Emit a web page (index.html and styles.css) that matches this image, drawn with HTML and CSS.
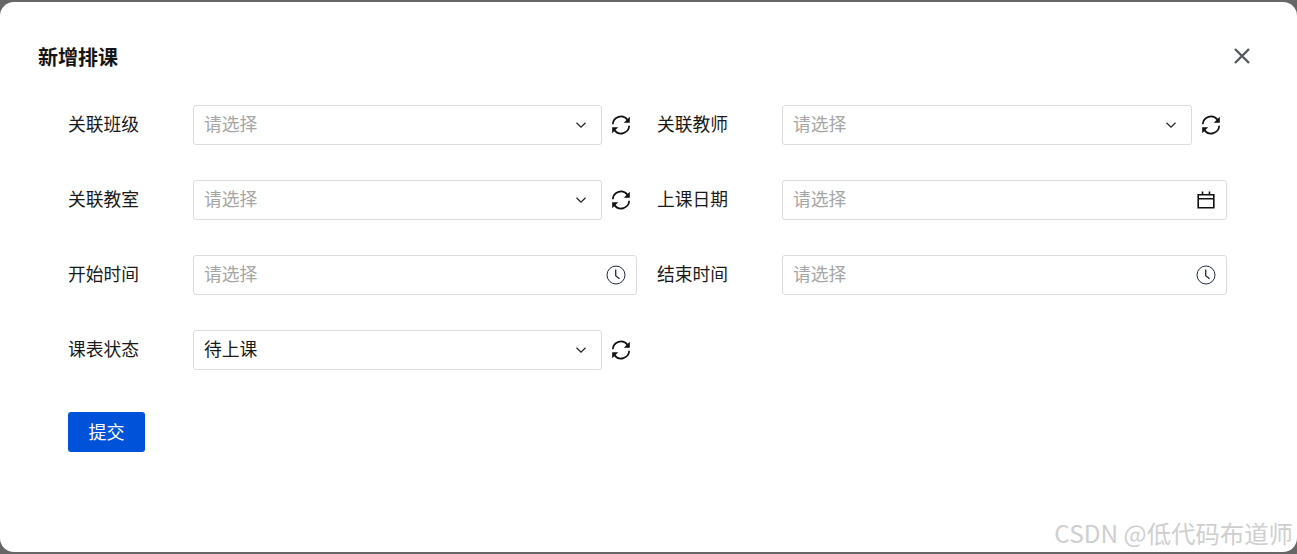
FILE: index.html
```html
<!DOCTYPE html>
<html lang="zh-CN">
<head>
    <meta charset="UTF-8">
    <title>新增排课</title>
    <link rel="stylesheet" href="styles.css">
</head>
<body>
    <svg class="icon-defs" width="0" height="0">
        <symbol id="chevron" viewBox="0 0 12 12"><path d="M1.500 3.800 6 8.200l4.500-4.400" fill="none" stroke="currentColor" stroke-width="1.200"/></symbol>
        <symbol id="refresh" viewBox="0 0 20 20">
            <path d="M1.800 9.200A8.200 8.200 0 0 1 16.400 4.600M18.200 10.800A8.200 8.200 0 0 1 3.600 15.400" fill="none" stroke="currentColor" stroke-width="1.700"/>
            <path d="M18.800 1.800v6h-6zM1.200 18.200v-6h6z" fill="currentColor"/>
        </symbol>
        <symbol id="clock" viewBox="0 0 20 20">
            <circle cx="10" cy="10" r="9" fill="none" stroke="currentColor" stroke-width="1"/>
            <path d="M9.700 4.500V10.800l3.800 3" fill="none" stroke="currentColor" stroke-width="1.300"/>
        </symbol>
        <symbol id="calendar" viewBox="0 0 18 18">
            <path d="M1.200 3.700h15.600v13H1.200zM1.200 7.700h15.600M5.500 .5v3.500M12.500 .5v3.500" fill="none" stroke="currentColor" stroke-width="1.600"/>
        </symbol>
    </svg>

    <div class="dialog">
        <header class="dialog-header">
            <h2>新增排课</h2>
            <svg class="close-icon" viewBox="0 0 16 16"><path d="M1 1l14 14M15 1 1 15" fill="none" stroke="currentColor" stroke-width="2.400"/></svg>
        </header>

        <form class="form-grid">
            <div class="form-item">
                <label>关联班级</label>
                <div class="control">
                    <div class="input"><span class="placeholder">请选择</span><svg class="chevron"><use href="#chevron"/></svg></div>
                    <svg class="refresh"><use href="#refresh"/></svg>
                </div>
            </div>
            <div class="form-item">
                <label>关联教师</label>
                <div class="control">
                    <div class="input"><span class="placeholder">请选择</span><svg class="chevron"><use href="#chevron"/></svg></div>
                    <svg class="refresh"><use href="#refresh"/></svg>
                </div>
            </div>
            <div class="form-item">
                <label>关联教室</label>
                <div class="control">
                    <div class="input"><span class="placeholder">请选择</span><svg class="chevron"><use href="#chevron"/></svg></div>
                    <svg class="refresh"><use href="#refresh"/></svg>
                </div>
            </div>
            <div class="form-item">
                <label>上课日期</label>
                <div class="control">
                    <div class="input"><span class="placeholder">请选择</span><svg class="calendar"><use href="#calendar"/></svg></div>
                </div>
            </div>
            <div class="form-item">
                <label>开始时间</label>
                <div class="control">
                    <div class="input"><span class="placeholder">请选择</span><svg class="clock"><use href="#clock"/></svg></div>
                </div>
            </div>
            <div class="form-item">
                <label>结束时间</label>
                <div class="control">
                    <div class="input"><span class="placeholder">请选择</span><svg class="clock"><use href="#clock"/></svg></div>
                </div>
            </div>
            <div class="form-item">
                <label>课表状态</label>
                <div class="control">
                    <div class="input"><span>待上课</span><svg class="chevron"><use href="#chevron"/></svg></div>
                    <svg class="refresh"><use href="#refresh"/></svg>
                </div>
            </div>
        </form>

        <button class="submit-button" type="button">提交</button>
    </div>

    <div class="watermark">CSDN @低代码布道师</div>
</body>
</html>
```

FILE: styles.css
```css
html, body {
    height: 100%;
}

body {
    margin: 0;
    padding: 2px 0;
    box-sizing: border-box;
    overflow: hidden;
    background: #666;
    color: #1a1a1a;
    font-family: "Noto Sans CJK SC", "Liberation Sans", sans-serif;
    font-size: 17.800px;
}

.icon-defs {
    position: absolute;
}

.dialog {
    height: 100%;
    box-sizing: border-box;
    padding: 0 46px 0 68px;
    background: #fff;
    border-radius: 14px;
}

.dialog-header {
    display: flex;
    align-items: center;
    justify-content: space-between;
    height: 103px;
    padding-top: 7px;
    box-sizing: border-box;
    margin-left: -30px;
}

.dialog-header h2 {
    margin: 0;
    font-size: 20px;
    line-height: 28px;
    font-weight: 700;
    color: #151515;
}

.close-icon {
    width: 16px;
    height: 16px;
    margin: -3px 1px 0 0;
    color: #565a60;
}

.form-grid {
    display: grid;
    grid-template-columns: 569px 570px;
    column-gap: 20px;
    row-gap: 35px;
}

.form-item {
    display: flex;
    align-items: center;
    height: 40px;
}

.form-item label {
    flex: 0 0 125px;
    line-height: 37px;
    padding-bottom: 3px;
}

.control {
    display: flex;
    align-items: center;
    flex: 1;
}

.input {
    flex: 1;
    display: flex;
    align-items: center;
    justify-content: space-between;
    height: 40px;
    box-sizing: border-box;
    padding: 0 10px;
    border: 1px solid #dcdcdc;
    border-radius: 3px;
    line-height: 36px;
}

.input span {
    position: relative;
    top: -2px;
}

.placeholder {
    color: #a6a6a6;
}

.chevron {
    width: 12px;
    height: 12px;
    margin-right: 4px;
    color: #222;
}

.refresh {
    flex: 0 0 20px;
    width: 20px;
    height: 20px;
    margin: 0 6px 0 9px;
    color: #111;
}

.clock {
    width: 20px;
    height: 20px;
    color: #1f2d3d;
}

.calendar {
    width: 18px;
    height: 18px;
    margin: -1px 1px 0 0;
    color: #111;
}

.submit-button {
    display: block;
    width: 77px;
    height: 40px;
    margin-top: 42px;
    padding: 0 0 2px;
    border: none;
    border-radius: 3px;
    background: #0052d9;
    color: #fff;
    font-family: inherit;
    font-size: 18px;
}

.watermark {
    position: absolute;
    right: 4px;
    bottom: 3px;
    color: #cfcfcf;
    font-size: 24.400px;
    line-height: 36px;
    white-space: nowrap;
}
```
